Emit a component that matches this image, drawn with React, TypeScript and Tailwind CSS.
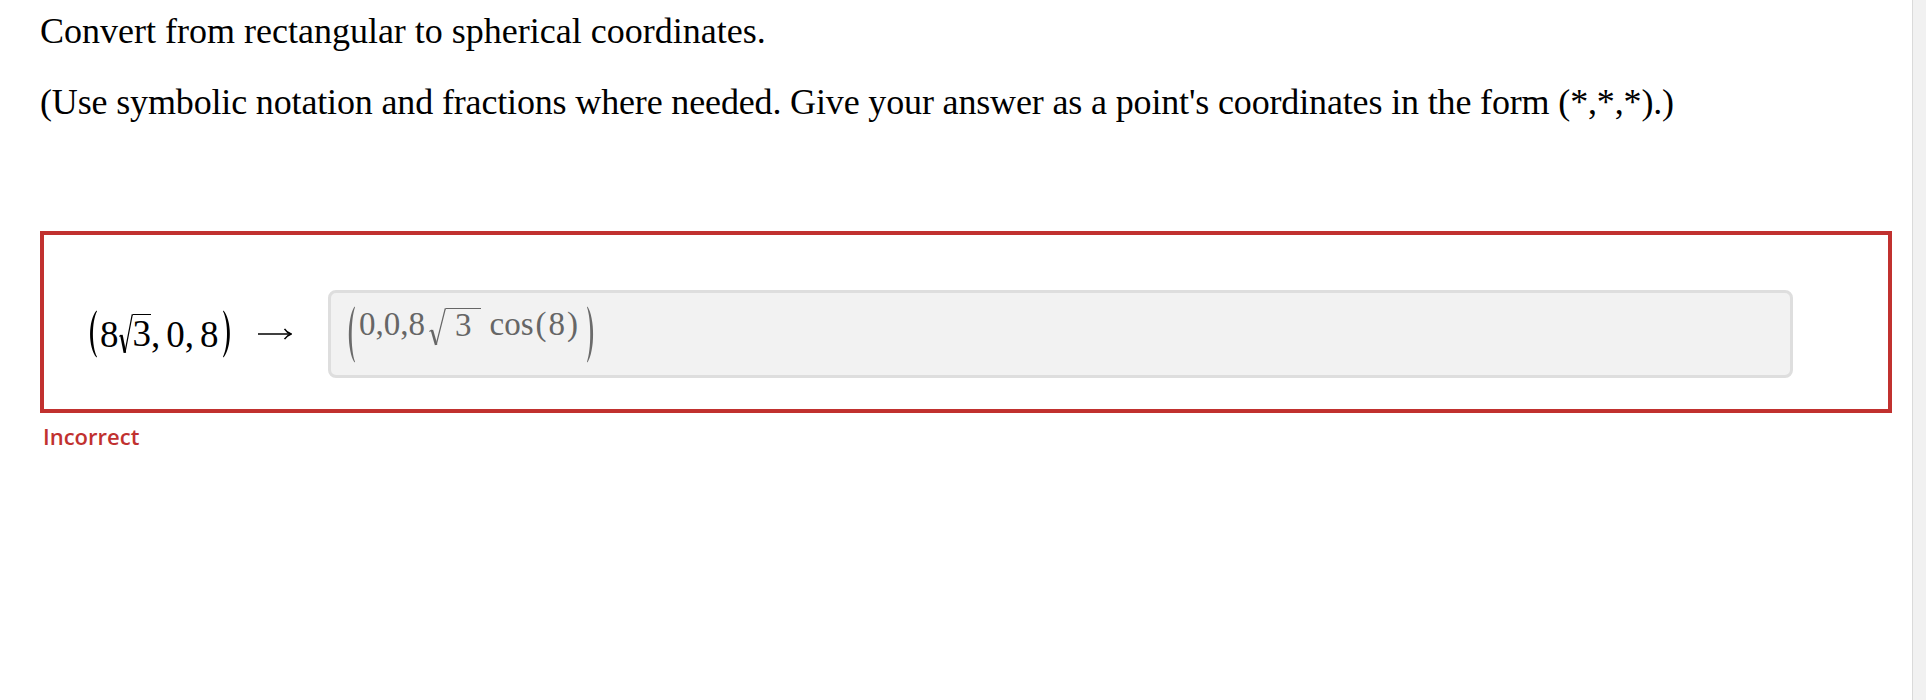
import React from "react";

const serif = { fontFamily: '"Liberation Serif", "Times New Roman", serif' };

function ParenL({ w, h, color, k }: { w: number; h: number; color: string; k: number }) {
  const d = `M${w - 0.5} 0.5 C${k} ${h * 0.22}, ${k} ${h * 0.78}, ${w - 0.5} ${h - 0.5} L${w} ${h - 1.2} C${k + 3.6} ${h * 0.76}, ${k + 3.6} ${h * 0.24}, ${w} 1.2 Z`;
  return (
    <svg width={w} height={h} viewBox={`0 0 ${w} ${h}`} className="shrink-0 block">
      <path d={d} fill={color} />
    </svg>
  );
}

function ParenR({ w, h, color, k }: { w: number; h: number; color: string; k: number }) {
  return (
    <svg width={w} height={h} viewBox={`0 0 ${w} ${h}`} className="shrink-0 block">
      <g transform={`translate(${w} 0) scale(-1 1)`}>
        <path
          d={`M${w - 0.5} 0.5 C${k} ${h * 0.22}, ${k} ${h * 0.78}, ${w - 0.5} ${h - 0.5} L${w} ${h - 1.2} C${k + 3.6} ${h * 0.76}, ${k + 3.6} ${h * 0.24}, ${w} 1.2 Z`}
          fill={color}
        />
      </g>
    </svg>
  );
}

function Surd({ w, h, color, tickY }: { w: number; h: number; color: string; tickY: number }) {
  const bx = w * 0.42;
  return (
    <svg width={w} height={h} viewBox={`0 0 ${w} ${h}`} className="shrink-0 block">
      <path d={`M0.4 ${tickY + 1.4} L${w * 0.17} ${tickY}`} stroke={color} strokeWidth={1.2} fill="none" />
      <path d={`M${w * 0.17} ${tickY} L${bx} ${h - 1.2}`} stroke={color} strokeWidth={2.6} fill="none" />
      <path d={`M${bx} ${h - 1.2} L${w - 0.8} 0.75 H${w}`} stroke={color} strokeWidth={1.25} fill="none" />
    </svg>
  );
}

function Arrow() {
  return (
    <svg width="34" height="14" viewBox="0 0 34 14" className="shrink-0 block">
      <path d="M0 7 H32.5" stroke="#000" strokeWidth="1.5" fill="none" />
      <path d="M26.5 1.8 Q28.8 5.6 33.2 7 Q28.8 8.4 26.5 12.2" stroke="#000" strokeWidth="1.5" fill="none" />
    </svg>
  );
}

export default function App() {
  return (
    <div className="flex h-[700px] w-full bg-white overflow-hidden">
      <div className="flex-1 pl-[40px] pr-[20px] pt-[11px]" style={serif}>
        <p className="text-[36px] leading-[40px] text-black">Convert from rectangular to spherical coordinates.</p>
        <p className="mt-[31px] text-[36px] leading-[40px] tracking-[-0.15px] text-black">
          (Use symbolic notation and fractions where needed. Give your answer as a point's coordinates in the form (*,*,*).)
        </p>

        <div className="mt-[109px] border-[4px] border-[#c1312f] pl-[41px] pr-[95px] pt-[55px] pb-[31px]">
          <div className="flex items-center">
            <div className="flex w-[173px] items-center text-[37px] leading-[37px] text-black">
              <ParenL w={12} h={48} color="#000" k={3} />
              <span className="ml-[3px]">8</span>
              <div className="flex items-start">
                <Surd w={14} h={40} color="#000" tickY={21} />
                <span className="border-t-[1.5px] border-black">3</span>
              </div>
              <span>,</span>
              <span className="ml-[6px]">0</span>
              <span>,</span>
              <span className="ml-[6px]">8</span>
              <span className="ml-[4px]">
                <ParenR w={12} h={48} color="#000" k={3} />
              </span>
            </div>
            <Arrow />
            <div className="ml-[36px] h-[88px] flex-1 rounded-[8px] border-[3px] border-[#dedede] bg-[#f2f2f2] pl-[14px] pt-[13px]">
              <div className="flex items-start text-[33px] leading-[32px] text-[#666666]">
                <ParenL w={10} h={57} color="#6b6b6b" k={2} />
                <span className="ml-[4px] mt-[2px]">0,0,8</span>
                <div className="ml-[4px] mt-[2px] flex items-start">
                  <Surd w={17} h={38} color="#666666" tickY={22} />
                  <span className="border-t-[1.5px] border-[#666666] px-[9px]">3</span>
                </div>
                <span className="ml-[9px] mt-[2px]">cos</span>
                <span className="ml-[2px] mt-[2px]">(</span>
                <span className="mt-[2px] px-[2px]">8</span>
                <span className="mt-[2px]">)</span>
                <span className="ml-[9px]">
                  <ParenR w={10} h={57} color="#6b6b6b" k={2} />
                </span>
              </div>
            </div>
          </div>
        </div>

        <div
          className="ml-[3px] mt-[8px] text-[22px] leading-[30px] font-semibold text-[#c1312f]"
          style={{ fontFamily: '"Open Sans", "Noto Sans", sans-serif' }}
        >
          Incorrect
        </div>
      </div>
      <div className="h-[700px] w-[14px] shrink-0 border-l border-[#dadada] bg-[#f1f1f1]" />
    </div>
  );
}
